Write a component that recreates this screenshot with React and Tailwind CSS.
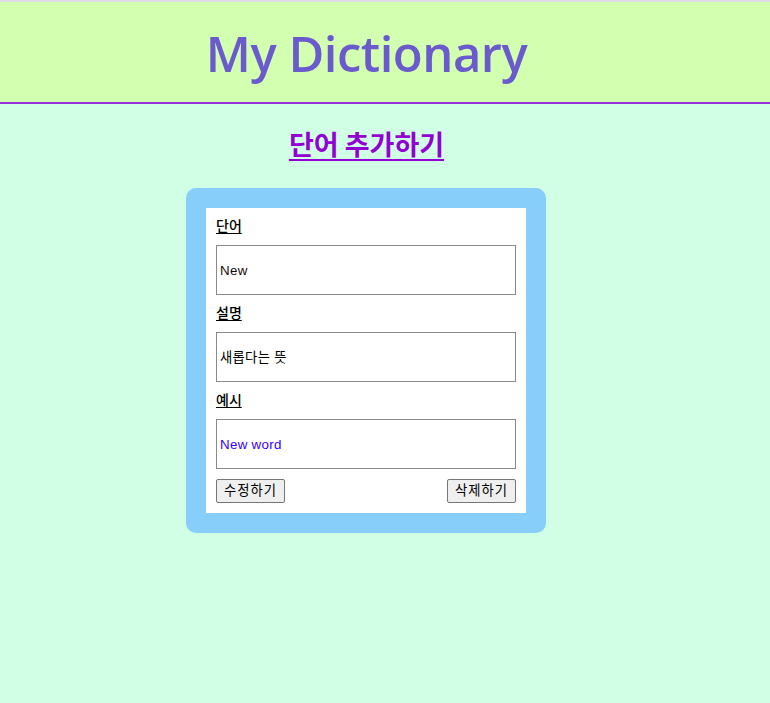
import React from 'react';

const fields = [
    { label: '단어', value: 'New', color: 'text-[#1a0a0a]' },
    { label: '설명', value: '새롭다는 뜻', color: 'text-black' },
    { label: '예시', value: 'New word', color: 'text-[#3300ff]' },
];

const Field = ({ label, value, color }) => (
    <div className="flex flex-col">
        <span className="h-[17px] mb-[10px] text-[14px] leading-[17px] font-medium text-black underline underline-offset-2 self-start">
            {label}
        </span>
        <div className={`h-[50px] mb-[10px] border border-[#8a8a8a] flex items-center pl-[3px] pt-[1px] text-[13.33px] tracking-[0.3px] ${color}`}>
            {value}
        </div>
    </div>
);

export default function App() {
    return (
        <div
            className="min-h-[703px] bg-[#d0ffe6] border-t-2 border-[#dcdce6] flex flex-col"
            style={{ fontFamily: '"Liberation Sans", "Noto Sans CJK KR", sans-serif' }}
        >
            {/* title bar */}
            <header className="h-[102px] bg-[#d3ffb0] border-b-2 border-[#9531dc] flex items-center">
                <div className="w-[733px] flex justify-center">
                    <h1
                        className="text-[49px] leading-none font-semibold tracking-[-0.5px] text-[#6a5acd] pt-[3px]"
                        style={{ fontFamily: '"Open Sans", "Noto Sans", sans-serif' }}
                    >
                        My Dictionary
                    </h1>
                </div>
            </header>

            <div className="w-[733px] flex justify-center mt-[23px]">
                <h2
                    className="text-[27px] leading-[34px] font-semibold text-[#9400d3] underline underline-offset-4"
                    style={{ fontFamily: '"Noto Sans CJK KR", sans-serif' }}
                >
                    단어 추가하기
                </h2>
            </div>

            {/* word card */}
            <div className="mt-[27px] ml-[186px] w-[360px] bg-[#87cefa] rounded-[10px] p-[20px]">
                <div className="bg-white pt-[10px] px-[10px] pb-[10px]">
                    {fields.map(f => (
                        <Field key={f.label} {...f} />
                    ))}
                    <div className="flex justify-between">
                        <button className="h-[24px] w-[69px] bg-[#efefef] border border-[#767676] rounded-[2px] text-[13.33px] tracking-[1px] text-black">
                            수정하기
                        </button>
                        <button className="h-[24px] w-[69px] bg-[#efefef] border border-[#767676] rounded-[2px] text-[13.33px] tracking-[1px] text-black">
                            삭제하기
                        </button>
                    </div>
                </div>
            </div>
        </div>
    );
}
